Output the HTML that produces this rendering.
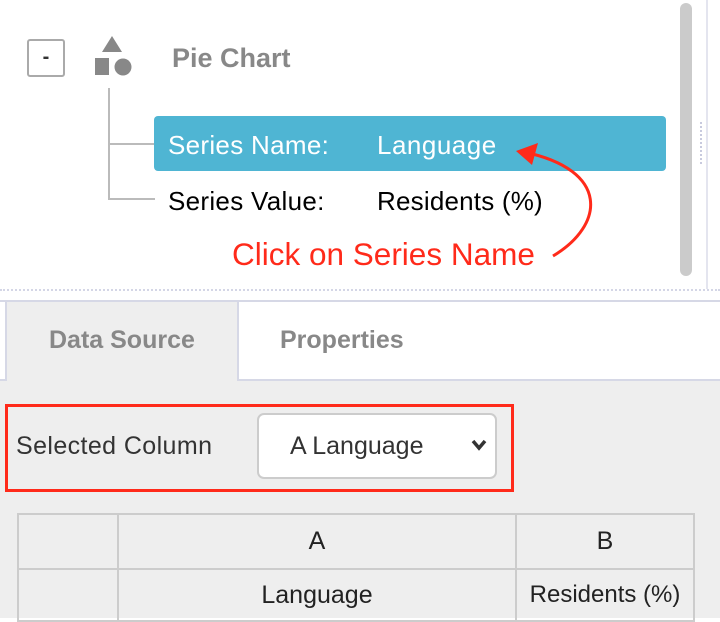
<!DOCTYPE html>
<html><head><style>
*{margin:0;padding:0;box-sizing:border-box}
body{width:720px;height:618px;overflow:hidden;background:#fff;font-family:"Liberation Sans",sans-serif;position:relative}
.a{position:absolute;white-space:nowrap}
td{padding:0;border:2px solid #ccc}
</style></head><body>
<div class="a" style="left:0;top:289px;width:720px;border-top:2px dotted #d4d6e6"></div>
<div class="a" style="left:706px;top:0;width:2px;height:289px;background:#e4e5ef"></div>
<div class="a" style="left:700px;top:122px;height:42px;border-left:2px dotted #c8cade"></div>
<div class="a" style="left:680px;top:3px;width:12px;height:273px;background:#cbcbcb;border-radius:6px"></div>
<div class="a" style="left:27px;top:39px;width:38px;height:38px;border:2px solid #aaa;border-radius:3px;font-weight:bold;font-size:20px;text-align:center;line-height:32px;color:#333">-</div>
<svg class="a" style="left:94px;top:36px" width="40" height="40"><polygon points="18,0 28,16 8,16" fill="#888"/><rect x="1" y="22" width="14" height="17" fill="#888"/><circle cx="29" cy="31" r="8.5" fill="#888"/></svg>
<div class="a" style="left:172px;top:43px;font-size:27px;font-weight:bold;color:#888">Pie Chart</div>
<div class="a" style="left:108px;top:88px;width:2px;height:112px;background:#bbb"></div>
<div class="a" style="left:108px;top:143px;width:47px;height:2px;background:#bbb"></div>
<div class="a" style="left:108px;top:198px;width:47px;height:2px;background:#bbb"></div>
<div class="a" style="left:154px;top:116px;width:512px;height:55px;background:#4fb5d3;border-radius:4px"></div>
<div class="a" style="left:168px;top:130px;font-size:26px;color:#fff;letter-spacing:0.3px">Series Name:</div>
<div class="a" style="left:377px;top:130px;font-size:26px;color:#fff;letter-spacing:0.5px">Language</div>
<div class="a" style="left:168px;top:186px;font-size:26px;color:#000;letter-spacing:0.3px">Series Value:</div>
<div class="a" style="left:377px;top:186px;font-size:26px;color:#000;letter-spacing:0.2px">Residents (%)</div>
<div class="a" style="left:232px;top:236px;font-size:31.5px;color:#ff2a1a">Click on Series Name</div>
<svg class="a" style="left:500px;top:135px" width="110" height="135"><path d="M53,121 C105,90 110,35 24,17" fill="none" stroke="#ff2a1a" stroke-width="3"/><polygon points="16,16 38,8 32,30" fill="#ff2a1a"/></svg>
<div class="a" style="left:0;top:300px;width:720px;height:318px;background:#eee;border-top:2px solid #d6d8e6"></div>
<div class="a" style="left:0;top:302px;width:7px;height:79px;background:#fff;border-right:2px solid #d6d8e6;border-bottom:2px solid #d6d8e6"></div>
<div class="a" style="left:237px;top:302px;width:483px;height:79px;background:#fff;border-left:2px solid #d6d8e6;border-bottom:2px solid #d6d8e6"></div>
<div class="a" style="left:49px;top:326px;font-size:25px;font-weight:bold;color:#888">Data Source</div>
<div class="a" style="left:280px;top:326px;font-size:25px;font-weight:bold;color:#888">Properties</div>
<div class="a" style="left:5px;top:404px;width:509px;height:88px;border:3px solid #ff2a1a"></div>
<div class="a" style="left:16px;top:432px;font-size:25px;color:#333;letter-spacing:0.4px">Selected Column</div>
<div class="a" style="left:257px;top:413px;width:240px;height:66px;background:#fff;border:2px solid #ccc;border-radius:7px"></div>
<div class="a" style="left:290px;top:432px;font-size:25px;color:#333">A Language</div>
<svg class="a" style="left:470px;top:438px" width="18" height="14"><path d="M3,3 L9,10 L15,3" fill="none" stroke="#333" stroke-width="3.5"/></svg>
<table class="a" style="left:17px;top:513px;border-collapse:collapse;font-size:25px;color:#222;text-align:center">
<tr><td style="width:100px;height:55px"></td><td style="width:398px">A</td><td style="width:178px">B</td></tr>
<tr><td style="height:52px"></td><td>Language</td><td style="font-size:24px">Residents (%)</td></tr>
</table>
</body></html>
